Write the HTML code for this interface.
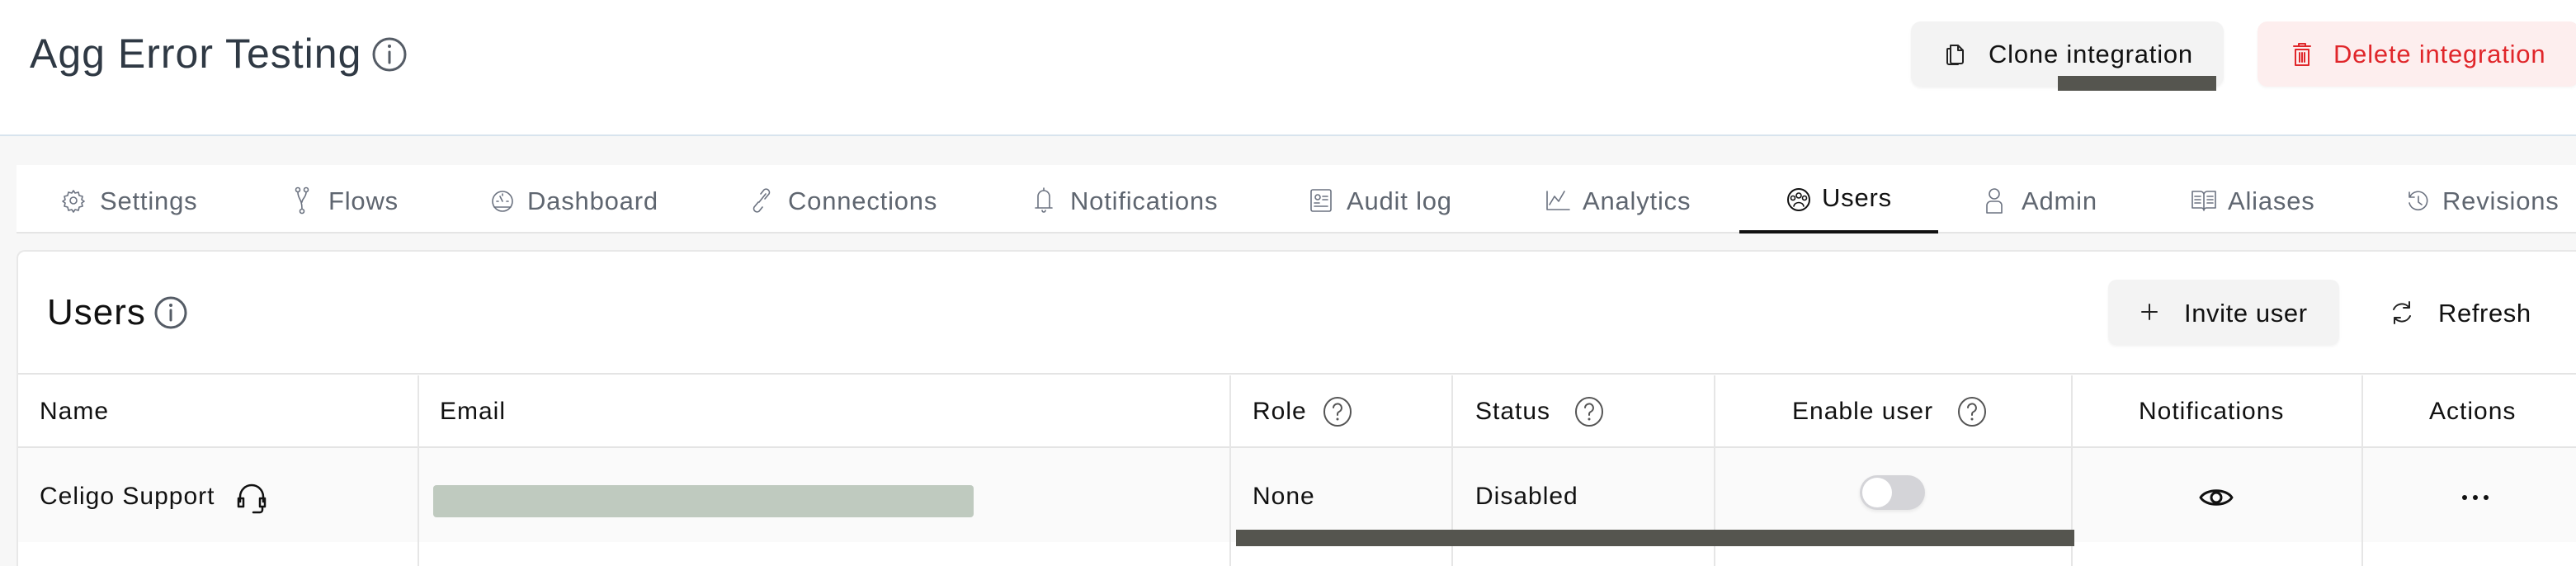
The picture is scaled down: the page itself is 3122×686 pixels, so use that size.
<!DOCTYPE html>
<html><head><meta charset="utf-8"><style>
*{margin:0;padding:0;box-sizing:border-box}
html,body{width:3122px;height:686px;overflow:hidden}
body{background:#fff;font-family:"Liberation Sans",sans-serif;position:relative}
.a{position:absolute}
.t{position:absolute;white-space:nowrap;line-height:1;letter-spacing:1px}
svg{position:absolute;fill:none;stroke-linecap:round;stroke-linejoin:round}
.tab{font-size:31px;color:#5f6670;top:228px;letter-spacing:0.8px}
.tabi{stroke:#6b7280;stroke-width:1.6}
.th{font-size:30px;color:#111;top:484px}
.td{font-size:30px;color:#111;top:587px}
.vl{position:absolute;width:2px;background:#e6e6e6;top:455px;height:231px}
.q{stroke:#555;stroke-width:2}
</style></head><body>
<!-- header -->
<div class="t" style="left:36px;top:40px;font-size:50px;color:#2f3944;letter-spacing:1px">Agg Error Testing</div>
<svg style="left:450px;top:44px" width="44" height="44" viewBox="0 0 44 44"><circle cx="22" cy="22" r="19" stroke="#555c66" stroke-width="3"/><line x1="22" y1="19" x2="22" y2="32" stroke="#555c66" stroke-width="3"/><circle cx="22" cy="12" r="2" fill="#555c66"/></svg>

<div class="a" style="left:2316px;top:26px;width:379px;height:79px;background:#f3f3f3;border-radius:12px;box-shadow:0 2px 3px rgba(0,0,0,.05)"></div>
<svg style="left:2356px;top:50px" width="28" height="30" viewBox="0 0 28 30"><path d="M8 5h9l6 6v14a2 2 0 0 1-2 2H10a2 2 0 0 1-2-2z M17 5v6h6 M8 9H5a1 1 0 0 0-1 1v16a2 2 0 0 0 2 2h11" stroke="#222" stroke-width="2"/></svg>
<div class="t" style="left:2410px;top:50px;font-size:31px;color:#111;letter-spacing:0.8px">Clone integration</div>
<div class="a" style="left:2494px;top:92px;width:192px;height:18px;background:#55554f"></div>

<div class="a" style="left:2736px;top:26px;width:390px;height:79px;background:#fdeeee;border-radius:12px;box-shadow:0 2px 3px rgba(0,0,0,.04)"></div>
<svg style="left:2777px;top:50px" width="26" height="32" viewBox="0 0 26 32"><path d="M3 6h20 M9 6V3h8v3 M5 10h16v19H5z M10 14v11 M13 14v11 M16 14v11" stroke="#e0262a" stroke-width="2"/></svg>
<div class="t" style="left:2828px;top:50px;font-size:31px;color:#e0262a;letter-spacing:0.8px">Delete integration</div>

<div class="a" style="left:0;top:163px;width:3122px;height:2px;background:#d8e4ee"></div>
<div class="a" style="left:0;top:165px;width:3122px;height:521px;background:#f7f7f7"></div>

<!-- tabs -->
<div class="a" style="left:20px;top:200px;width:3102px;height:83px;background:#fff;border-bottom:2px solid #e5e5e5"></div>
<svg class="tabi" style="left:74px;top:228px" width="30" height="30" viewBox="0 0 30 30"><circle cx="15" cy="15" r="4"/><path d="M15 3l2 3 4-1 1 4 4 1-1 4 3 2-3 2 1 4-4 1-1 4-4-1-2 3-2-3-4 1-1-4-4-1 1-4-3-2 3-2-1-4 4-1 1-4 4 1z"/></svg>
<div class="t tab" style="left:121px">Settings</div>
<svg class="tabi" style="left:356px;top:226px" width="20" height="34" viewBox="0 0 20 34"><circle cx="5" cy="4" r="2.5"/><circle cx="15" cy="4" r="2.5"/><circle cx="10" cy="30" r="2.5"/><path d="M5 7c0 8 5 8 5 20 M15 7c0 6-5 8-5 12"/></svg>
<div class="t tab" style="left:398px">Flows</div>
<svg class="tabi" style="left:594px;top:229px" width="30" height="30" viewBox="0 0 30 30"><circle cx="15" cy="15" r="12"/><path d="M15 15l-3-6 M5 22h20 M8 15h2 M20 15h2 M15 6v2"/></svg>
<div class="t tab" style="left:639px">Dashboard</div>
<svg class="tabi" style="left:908px;top:225px" width="30" height="36" viewBox="0 0 30 36"><path d="M12 20l8-10 M14 10l4-5a4 4 0 0 1 6 5l-5 6 M16 26l-4 5a4 4 0 0 1-6-5l5-6"/></svg>
<div class="t tab" style="left:955px">Connections</div>
<svg class="tabi" style="left:1252px;top:224px" width="26" height="36" viewBox="0 0 26 36"><path d="M13 4v3 M6 27V14a7 7 0 0 1 14 0v13 M3 28h20 M11 31a2 2 0 0 0 4 0"/></svg>
<div class="t tab" style="left:1297px">Notifications</div>
<svg class="tabi" style="left:1586px;top:227px" width="30" height="32" viewBox="0 0 30 32"><rect x="3" y="3" width="24" height="26" rx="2"/><circle cx="11" cy="12" r="3"/><path d="M7 19h6 M17 11h6 M17 15h6 M7 23h16"/></svg>
<div class="t tab" style="left:1632px">Audit log</div>
<svg class="tabi" style="left:1872px;top:229px" width="32" height="28" viewBox="0 0 32 28"><path d="M3 3v22h27 M6 19l6-10 5 6 7-12"/></svg>
<div class="t tab" style="left:1918px">Analytics</div>
<svg style="left:2164px;top:224px" width="32" height="36" viewBox="0 0 32 36"><circle cx="16" cy="18" r="13" stroke="#111" stroke-width="2"/><circle cx="16" cy="13" r="3" stroke="#111" stroke-width="1.6"/><circle cx="9" cy="16" r="2.5" stroke="#111" stroke-width="1.6"/><circle cx="23" cy="16" r="2.5" stroke="#111" stroke-width="1.6"/><path d="M10 26c1-6 11-6 12 0" stroke="#111" stroke-width="1.6"/></svg>
<div class="t tab" style="left:2208px;top:224px;color:#111">Users</div>
<div class="a" style="left:2108px;top:279px;width:241px;height:4px;background:#111"></div>
<svg class="tabi" style="left:2404px;top:225px" width="26" height="36" viewBox="0 0 26 36"><circle cx="13" cy="10" r="6"/><path d="M4 33V24a5 5 0 0 1 5-5h8a5 5 0 0 1 5 5v9z"/></svg>
<div class="t tab" style="left:2450px">Admin</div>
<svg class="tabi" style="left:2654px;top:228px" width="34" height="30" viewBox="0 0 34 30"><path d="M3 4h10a4 4 0 0 1 4 4v19a3 3 0 0 0-3-3H3z M31 4H21a4 4 0 0 0-4 4v19a3 3 0 0 1 3-3h11z M6 10h7 M6 14h7 M6 18h7 M21 10h7 M21 14h7 M21 18h7"/></svg>
<div class="t tab" style="left:2700px">Aliases</div>
<svg class="tabi" style="left:2916px;top:229px" width="30" height="30" viewBox="0 0 30 30"><path d="M5 9A11 11 0 1 1 4 17 M4 4v6h6 M15 9v7l4 3"/></svg>
<div class="t tab" style="left:2960px">Revisions</div>

<!-- card -->
<div class="a" style="left:20px;top:303px;width:3102px;height:383px;background:#fff;border:2px solid #e8e8e8;border-right:none;border-bottom:none;border-radius:10px 0 0 0"></div>
<div class="t" style="left:57px;top:357px;font-size:44px;color:#111">Users</div>
<svg style="left:186px;top:358px" width="42" height="42" viewBox="0 0 42 42"><circle cx="21" cy="21" r="18" stroke="#555c66" stroke-width="3"/><line x1="21" y1="18" x2="21" y2="30" stroke="#555c66" stroke-width="3"/><circle cx="21" cy="12" r="2" fill="#555c66"/></svg>

<div class="a" style="left:2555px;top:339px;width:280px;height:79px;background:#f3f3f3;border-radius:10px;box-shadow:0 2px 3px rgba(0,0,0,.05)"></div>
<svg style="left:2594px;top:367px" width="22" height="22" viewBox="0 0 22 22"><path d="M11 2v18 M2 11h18" stroke="#222" stroke-width="2"/></svg>
<div class="t" style="left:2647px;top:364px;font-size:31px;color:#111;letter-spacing:0.6px">Invite user</div>
<svg style="left:2896px;top:362px" width="30" height="34" viewBox="0 0 30 34"><path d="M24 11A11 11 0 0 0 5 13 M6 23a11 11 0 0 0 19-2 M24 4v7h-7 M6 30v-7h7" stroke="#222" stroke-width="2"/></svg>
<div class="t" style="left:2955px;top:364px;font-size:31px;color:#111;letter-spacing:0.6px">Refresh</div>

<!-- table -->
<div class="a" style="left:22px;top:452px;width:3100px;height:2px;background:#e4e4e4"></div>
<div class="a" style="left:22px;top:541px;width:3100px;height:2px;background:#e4e4e4"></div>
<div class="a" style="left:22px;top:543px;width:3100px;height:114px;background:#fafafa"></div>
<div class="vl" style="left:506px"></div>
<div class="vl" style="left:1490px"></div>
<div class="vl" style="left:1759px"></div>
<div class="vl" style="left:2077px"></div>
<div class="vl" style="left:2510px"></div>
<div class="vl" style="left:2862px"></div>

<div class="t th" style="left:48px">Name</div>
<div class="t th" style="left:533px">Email</div>
<div class="t th" style="left:1518px">Role</div>
<svg style="left:1603px;top:480px" width="36" height="38" viewBox="0 0 36 38"><ellipse cx="18" cy="19" rx="16" ry="17" class="q"/><path d="M13 14a5 5 0 1 1 7 5c-2 1-2 2-2 4" class="q"/><circle cx="18" cy="28" r="1.5" fill="#555"/></svg>
<div class="t th" style="left:1788px">Status</div>
<svg style="left:1908px;top:480px" width="36" height="38" viewBox="0 0 36 38"><ellipse cx="18" cy="19" rx="16" ry="17" class="q"/><path d="M13 14a5 5 0 1 1 7 5c-2 1-2 2-2 4" class="q"/><circle cx="18" cy="28" r="1.5" fill="#555"/></svg>
<div class="t th" style="left:2172px">Enable user</div>
<svg style="left:2372px;top:480px" width="36" height="38" viewBox="0 0 36 38"><ellipse cx="18" cy="19" rx="16" ry="17" class="q"/><path d="M13 14a5 5 0 1 1 7 5c-2 1-2 2-2 4" class="q"/><circle cx="18" cy="28" r="1.5" fill="#555"/></svg>
<div class="t th" style="left:2592px">Notifications</div>
<div class="t th" style="left:2944px">Actions</div>

<div class="t td" style="left:48px">Celigo Support</div>
<svg style="left:285px;top:584px" width="40" height="40" viewBox="0 0 40 40"><path d="M6 24v-6a14 14 0 0 1 28 0v6 M4 20h6v10H4z M30 20h6v10h-6z M33 30v4a3 3 0 0 1-3 3h-8" stroke="#111" stroke-width="2.5"/></svg>
<div class="a" style="left:525px;top:588px;width:655px;height:39px;background:#bfcabf;border-radius:4px"></div>
<div class="t td" style="left:1518px">None</div>
<div class="t td" style="left:1788px">Disabled</div>
<div class="a" style="left:2254px;top:576px;width:79px;height:42px;background:#d4d4d8;border-radius:21px;box-shadow:0 2px 4px rgba(0,0,0,.08)"></div>
<div class="a" style="left:2257px;top:579px;width:36px;height:36px;background:#fff;border-radius:50%"></div>
<svg style="left:2664px;top:588px" width="44" height="30" viewBox="0 0 44 30"><path d="M3 15C10 4 34 4 41 15C34 26 10 26 3 15z" stroke="#111" stroke-width="3"/><circle cx="22" cy="15" r="6" stroke="#111" stroke-width="3"/></svg>
<div class="a" style="left:2984px;top:600px;width:6px;height:6px;background:#111;border-radius:50%"></div>
<div class="a" style="left:2997px;top:600px;width:6px;height:6px;background:#111;border-radius:50%"></div>
<div class="a" style="left:3010px;top:600px;width:6px;height:6px;background:#111;border-radius:50%"></div>

<div class="a" style="left:1498px;top:642px;width:1016px;height:20px;background:#55554f"></div>
</body></html>
